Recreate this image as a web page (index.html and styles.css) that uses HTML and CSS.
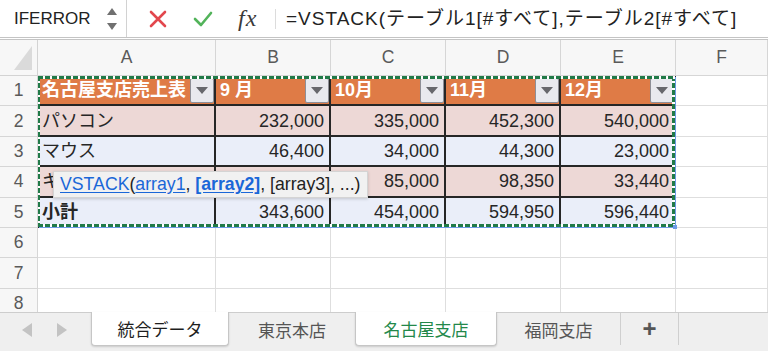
FILE: index.html
```html
<!DOCTYPE html>
<html lang="ja">
<head>
<meta charset="utf-8">
<link rel="stylesheet" href="styles.css">
</head>
<body>
<div class="app">
  <div class="fbar">
    <div class="namebox">IFERROR</div>
    <div class="spin">
      <svg width="12" height="26" viewBox="0 0 12 26"><polygon points="1,9 6,2 11,9" fill="#707070"/><polygon points="1,17 11,17 6,24" fill="#707070"/></svg>
    </div>
    <div class="actions">
      <svg class="ic-x" width="18" height="18" viewBox="0 0 18 18"><path d="M2 2 L16 16 M16 2 L2 16" stroke="#e2474d" stroke-width="2.6" stroke-linecap="round" fill="none"/></svg>
      <svg class="ic-ok" width="20" height="16" viewBox="0 0 20 16"><path d="M2 8 L8 14 L18 2" stroke="#52b35a" stroke-width="2.6" stroke-linecap="round" stroke-linejoin="round" fill="none"/></svg>
      <span class="fx">fx</span>
    </div>
    <div class="formula">=VSTACK(テーブル1[#すべて],テーブル2[#すべて]</div>
  </div>

  <div class="sheet">
    <div class="grid">
      <div class="corner"><svg width="20" height="26" viewBox="0 0 20 26"><polygon points="19,1 19,25 1,25" fill="#dadada"/></svg></div>
      <div class="ch">A</div><div class="ch">B</div><div class="ch">C</div><div class="ch">D</div><div class="ch">E</div><div class="ch">F</div>

      <div class="rh">1</div>
      <div class="c th"><span>名古屋支店売上表</span><span class="dd"><svg width="12" height="7" viewBox="0 0 12 7"><polygon points="0,0 12,0 6,7" fill="#67676c"/></svg></span></div>
      <div class="c th"><span>9 月</span><span class="dd"><svg width="12" height="7" viewBox="0 0 12 7"><polygon points="0,0 12,0 6,7" fill="#67676c"/></svg></span></div>
      <div class="c th"><span>10月</span><span class="dd"><svg width="12" height="7" viewBox="0 0 12 7"><polygon points="0,0 12,0 6,7" fill="#67676c"/></svg></span></div>
      <div class="c th"><span>11月</span><span class="dd"><svg width="12" height="7" viewBox="0 0 12 7"><polygon points="0,0 12,0 6,7" fill="#67676c"/></svg></span></div>
      <div class="c th"><span>12月</span><span class="dd"><svg width="12" height="7" viewBox="0 0 12 7"><polygon points="0,0 12,0 6,7" fill="#67676c"/></svg></span></div>
      <div class="e"></div>

      <div class="rh">2</div>
      <div class="c rp">パソコン</div>
      <div class="c rp num">232,000</div>
      <div class="c rp num">335,000</div>
      <div class="c rp num">452,300</div>
      <div class="c rp num">540,000</div>
      <div class="e"></div>

      <div class="rh">3</div>
      <div class="c rb">マウス</div>
      <div class="c rb num">46,400</div>
      <div class="c rb num">34,000</div>
      <div class="c rb num">44,300</div>
      <div class="c rb num">23,000</div>
      <div class="e"></div>

      <div class="rh">4</div>
      <div class="c rp">キーボード</div>
      <div class="c rp num">65,200</div>
      <div class="c rp num">85,000</div>
      <div class="c rp num">98,350</div>
      <div class="c rp num">33,440</div>
      <div class="e"></div>

      <div class="rh">5</div>
      <div class="c rb bold">小計</div>
      <div class="c rb num">343,600</div>
      <div class="c rb num">454,000</div>
      <div class="c rb num">594,950</div>
      <div class="c rb num">596,440</div>
      <div class="e"></div>

      <div class="rh">6</div><div class="e"></div><div class="e"></div><div class="e"></div><div class="e"></div><div class="e"></div><div class="e"></div>
      <div class="rh">7</div><div class="e"></div><div class="e"></div><div class="e"></div><div class="e"></div><div class="e"></div><div class="e"></div>
      <div class="rh">8</div><div class="e"></div><div class="e"></div><div class="e"></div><div class="e"></div><div class="e"></div><div class="e"></div>
    </div>

    <div class="marquee"><span class="handle"></span></div>

    <div class="tip"><span class="lk">VSTACK</span>(<span class="lk">array1</span>, <span class="lk strong">[array2]</span>, [array3], ...)</div>
  </div>

  <div class="tabs">
    <div class="nav">
      <svg width="12" height="14" viewBox="0 0 12 14"><polygon points="11,0 11,14 1,7" fill="#c3c3c3"/></svg>
      <svg width="12" height="14" viewBox="0 0 12 14"><polygon points="1,0 1,14 11,7" fill="#c3c3c3"/></svg>
    </div>
    <div class="tab on w1 dark">統合データ</div>
    <div class="tab w2">東京本店</div>
    <div class="tab on w3 green">名古屋支店</div>
    <div class="tab w4 sep">福岡支店</div>
    <div class="tab w5 sep plus">+</div>
  </div>
</div>
</body>
</html>
```

FILE: styles.css
```css
* { box-sizing: border-box; }
html, body { margin: 0; padding: 0; }
body {
  width: 768px;
  height: 351px;
  overflow: hidden;
  background: #fff;
  color: #222;
  font-family: "Liberation Sans", "Noto Sans CJK JP", sans-serif;
}
.app {
  display: flex;
  flex-direction: column;
  height: 351px;
}

/* formula bar */
.fbar {
  flex: none;
  height: 40px;
  display: flex;
  align-items: center;
  border-bottom: 3px double #c4c4c4;
}
.namebox {
  width: 106px;
  padding-left: 14px;
  font-size: 17px;
  color: #222;
}
.spin {
  width: 21px;
  height: 37px;
  display: flex;
  align-items: center;
  border-right: 1px solid #d2d2d2;
}
.actions {
  width: 148px;
  height: 37px;
  display: flex;
  align-items: center;
}
.ic-x { margin-left: 22px; }
.ic-ok { margin-left: 26px; }
.fx {
  margin-left: 25px;
  font-family: "Liberation Serif", serif;
  font-style: italic;
  font-size: 24px;
  color: #3a3a3a;
  letter-spacing: 1px;
}
.formula {
  height: 20px;
  border-left: 1px solid #dcdcdc;
  padding-left: 10px;
  font-size: 19px;
  letter-spacing: 1px;
  line-height: 20px;
  color: #222;
  white-space: nowrap;
}

/* sheet */
.sheet {
  flex: 1;
  position: relative;
  overflow: hidden;
}
.grid {
  display: grid;
  grid-template-columns: 38px 178px 115px 115px 115px 115px 1fr;
  grid-template-rows: 36px repeat(8, 30.4px);
}
.grid > div {
  border-right: 1px solid #dedede;
  border-bottom: 1px solid #dedede;
}
.corner {
  background: #f7f7f7;
  display: flex;
  align-items: flex-end;
  justify-content: flex-end;
  padding: 0 4px 4px 0;
  border-color: #d3d3d3 !important;
}
.ch, .rh {
  background: #f7f7f7;
  display: flex;
  align-items: center;
  justify-content: center;
  color: #5a5a5a;
  font-size: 17.5px;
  border-color: #d6d6d6 !important;
}
.c {
  display: flex;
  align-items: center;
  padding: 0 5px 0 4px;
  font-size: 18px;
  line-height: 1;
  color: #262626;
  white-space: nowrap;
  border-right: 2px solid #262626 !important;
  border-bottom: 2px solid #262626 !important;
}
.num { justify-content: flex-end; }
.bold { font-weight: bold; }
.th {
  background: #df7b46;
  color: #fff;
  font-weight: bold;
  justify-content: space-between;
  padding-right: 0;
}
.rp { background: #edd8d6; }
.rb { background: #eaeef9; }
.dd {
  width: 24px;
  height: 25px;
  background: #e9e9ee;
  border: 1px solid #8e8e96;
  border-radius: 2px;
  display: flex;
  align-items: center;
  justify-content: center;
}

/* copy marquee over A1:E5 */
.marquee {
  position: absolute;
  left: 38px;
  top: 36px;
  width: 637px;
  height: 151px;
  box-shadow: 1px 1px 0 0 #6d9be6;
  background:
    repeating-linear-gradient(90deg, #217a48 0 5px, #fff 5px 7px) top left / 100% 3px no-repeat,
    repeating-linear-gradient(90deg, #217a48 0 5px, #fff 5px 7px) bottom left / 100% 3px no-repeat,
    repeating-linear-gradient(180deg, #217a48 0 5px, #fff 5px 7px) top left / 2px 100% no-repeat,
    repeating-linear-gradient(180deg, #217a48 0 5px, #fff 5px 7px) top right / 3px 100% no-repeat;
}
.handle {
  position: absolute;
  right: -2px;
  bottom: -2px;
  width: 4px;
  height: 4px;
  background: #6d9be6;
}

/* function tooltip */
.tip {
  position: absolute;
  left: 53px;
  top: 131px;
  height: 27px;
  padding: 0 6px;
  display: flex;
  align-items: center;
  background: #f1f1f1;
  border: 1px solid #d4d4d4;
  box-shadow: 0 1px 3px rgba(0,0,0,0.18);
  font-size: 17.7px;
  color: #222;
  white-space: pre;
}
.lk {
  color: #1a67d8;
  text-decoration: underline;
  text-underline-offset: 2px;
}
.strong { font-weight: bold; }

/* sheet tabs */
.tabs {
  flex: none;
  height: 39px;
  display: flex;
  align-items: flex-start;
  background: #efefef;
  border-top: 1px solid #cdcdcd;
}
.nav {
  width: 91px;
  height: 34px;
  display: flex;
  align-items: center;
  gap: 23px;
  padding-left: 21px;
}
.tab {
  height: 34px;
  margin-top: -1px;
  display: flex;
  align-items: center;
  justify-content: center;
  font-size: 17px;
  color: #555;
}
.tab.on {
  background: #fff;
  border: 1px solid #c6c6c6;
  border-top: none;
  border-radius: 0 0 4px 4px;
  box-shadow: 0 1px 2px rgba(0,0,0,0.15);
}
.sep { border-right: 1px solid #cfcfcf; height: 32px; margin-top: 0; }
.dark { color: #1e1e1e; }
.green { color: #23884a; }
.plus { font-size: 24px; font-weight: bold; color: #555; }
.w1 { width: 138px; }
.w2 { width: 126px; }
.w3 { width: 142px; }
.w4 { width: 124px; }
.w5 { width: 58px; }
```
